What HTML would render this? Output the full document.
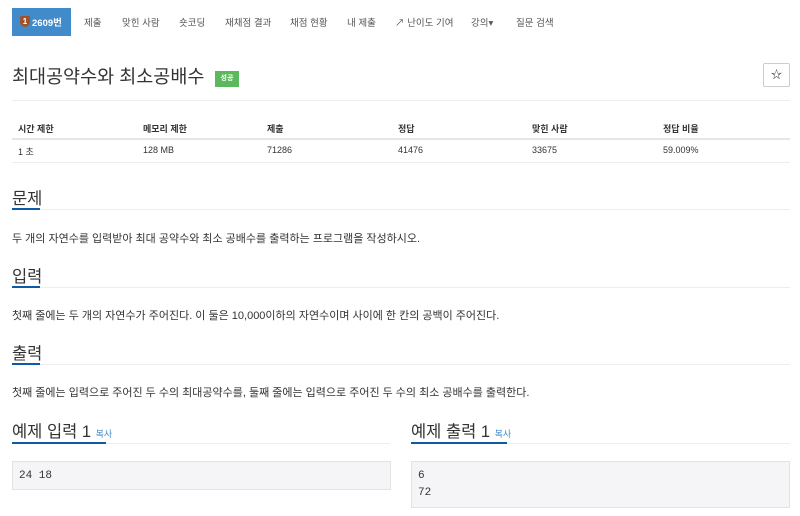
<!DOCTYPE html>
<html><head><meta charset="utf-8"><style>
*{margin:0;padding:0;box-sizing:border-box}
body{width:800px;height:516px;background:#fff;font-family:"Liberation Sans","Noto Sans CJK KR",sans-serif;color:#333;position:relative;overflow:hidden}
.a{position:absolute;white-space:nowrap}
.nav{font-size:9.5px;color:#555;top:15px}
.th{font-size:9px;font-weight:bold;top:122px;color:#333}
.td{font-size:9px;top:145px;color:#333}
.h{font-size:16.5px;color:#333}
.ul{position:absolute;height:2px;background:#0d5aa7}
.gl{position:absolute;height:1px;background:#eee}
.p{font-size:11px;color:#333}
.pre{position:absolute;background:#f5f5f7;border:1px solid #e3e3e3;font-family:"Liberation Mono","Noto Sans CJK KR",monospace;font-size:11px;line-height:17px;padding:6px 6px;color:#333}
</style></head><body>
<div class="a" style="left:12px;top:8px;width:59px;height:28px;background:#428bca"></div>
<div class="a" style="left:20px;top:16px;width:10px;height:11px;background:#a0522d;border-radius:1px 1px 5px 5px;color:#fff;font-size:8px;text-align:center;line-height:11px;font-weight:bold">1</div>
<div class="a" style="left:32px;top:15px;font-size:9.5px;color:#fff;font-weight:bold">2609번</div>
<div class="a nav" style="left:84px">제출</div>
<div class="a nav" style="left:122px">맞힌 사람</div>
<div class="a nav" style="left:179px">숏코딩</div>
<div class="a nav" style="left:225px">재채점 결과</div>
<div class="a nav" style="left:290px">채점 현황</div>
<div class="a nav" style="left:347px">내 제출</div>
<div class="a nav" style="left:395px">↗ 난이도 기여</div>
<div class="a nav" style="left:471px">강의▾</div>
<div class="a nav" style="left:516px">질문 검색</div>
<div class="a" style="left:12px;top:63px;font-size:18.5px;color:#333">최대공약수와 최소공배수</div>
<div class="a" style="left:215px;top:71px;width:24px;height:16px;background:#5cb85c;color:#fff;font-size:7px;text-align:center;line-height:16px;font-weight:bold">성공</div>
<div class="a" style="left:763px;top:63px;width:27px;height:24px;border:1px solid #ccc;border-radius:2px;text-align:center;line-height:22px;font-size:11px">☆</div>
<div class="gl" style="left:12px;top:100px;width:778px"></div>
<div class="a th" style="left:18px">시간 제한</div>
<div class="a th" style="left:143px">메모리 제한</div>
<div class="a th" style="left:267px">제출</div>
<div class="a th" style="left:398px">정답</div>
<div class="a th" style="left:532px">맞힌 사람</div>
<div class="a th" style="left:663px">정답 비율</div>
<div class="gl" style="left:12px;top:138px;width:778px;height:2px;background:#e6e6e6"></div>
<div class="a td" style="left:18px">1 초</div>
<div class="a td" style="left:143px">128 MB</div>
<div class="a td" style="left:267px">71286</div>
<div class="a td" style="left:398px">41476</div>
<div class="a td" style="left:532px">33675</div>
<div class="a td" style="left:663px">59.009%</div>
<div class="gl" style="left:12px;top:162px;width:778px"></div>

<div class="a h" style="left:12px;top:185px">문제</div>
<div class="gl" style="left:12px;top:209px;width:778px"></div><div class="ul" style="left:12px;top:208px;width:28px"></div>
<div class="a p" style="left:12px;top:230px">두 개의 자연수를 입력받아 최대 공약수와 최소 공배수를 출력하는 프로그램을 작성하시오.</div>
<div class="a h" style="left:12px;top:263px">입력</div>
<div class="gl" style="left:12px;top:287px;width:778px"></div><div class="ul" style="left:12px;top:286px;width:28px"></div>
<div class="a p" style="left:12px;top:307px">첫째 줄에는 두 개의 자연수가 주어진다. 이 둘은 10,000이하의 자연수이며 사이에 한 칸의 공백이 주어진다.</div>
<div class="a h" style="left:12px;top:340px">출력</div>
<div class="gl" style="left:12px;top:364px;width:778px"></div><div class="ul" style="left:12px;top:363px;width:28px"></div>
<div class="a p" style="left:12px;top:384px">첫째 줄에는 입력으로 주어진 두 수의 최대공약수를, 둘째 줄에는 입력으로 주어진 두 수의 최소 공배수를 출력한다.</div>

<div class="a h" style="left:12px;top:418px">예제 입력 1 <span style="font-size:9px;color:#428bca">복사</span></div>
<div class="gl" style="left:12px;top:443px;width:378px"></div><div class="ul" style="left:12px;top:442px;width:94px"></div>
<div class="a h" style="left:411px;top:418px">예제 출력 1 <span style="font-size:9px;color:#428bca">복사</span></div>
<div class="gl" style="left:411px;top:443px;width:379px"></div><div class="ul" style="left:411px;top:442px;width:96px"></div>
<div class="pre" style="left:12px;top:461px;width:379px;height:29px">24 18</div>
<div class="pre" style="left:411px;top:461px;width:379px;height:47px">6<br>72</div>
</body></html>
